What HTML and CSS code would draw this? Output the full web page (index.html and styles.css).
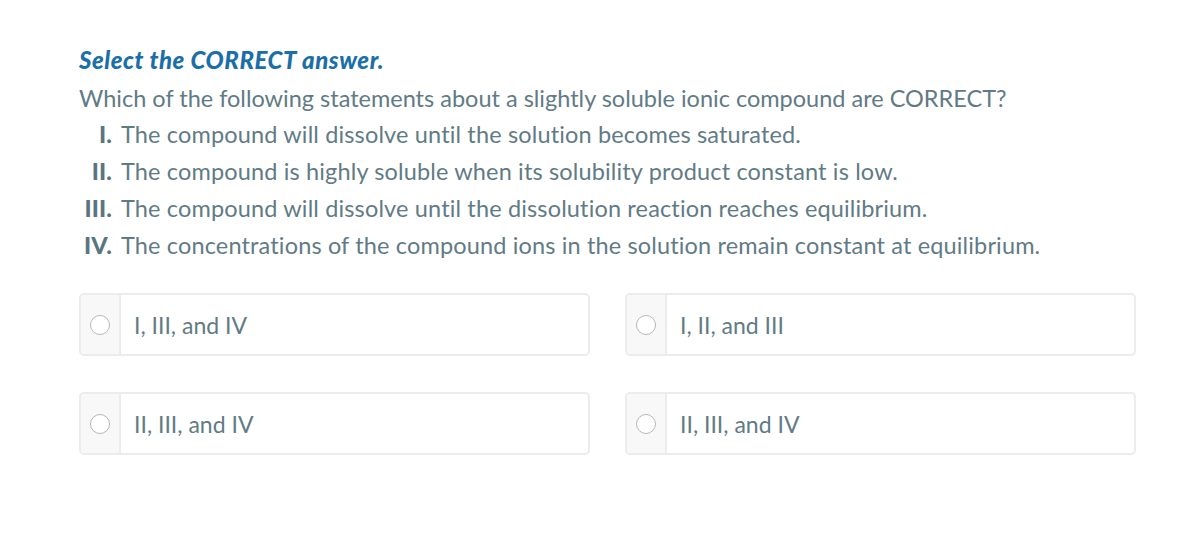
FILE: index.html
```html
<!DOCTYPE html>
<html>
<head>
<meta charset="utf-8">
<link rel="stylesheet" href="styles.css">
</head>
<body>
<div class="page">
  <h1 class="title">Select the CORRECT answer.</h1>
  <p class="question">Which of the following statements about a slightly soluble ionic compound are CORRECT?</p>
  <div class="statements">
    <div class="num">I.</div><div class="stmt">The compound will dissolve until the solution becomes saturated.</div>
    <div class="num">II.</div><div class="stmt">The compound is highly soluble when its solubility product constant is low.</div>
    <div class="num">III.</div><div class="stmt">The compound will dissolve until the dissolution reaction reaches equilibrium.</div>
    <div class="num">IV.</div><div class="stmt">The concentrations of the compound ions in the solution remain constant at equilibrium.</div>
  </div>
  <div class="options">
    <div class="option"><div class="radio-cell"><span class="radio"></span></div><div class="label">I, III, and IV</div></div>
    <div class="option"><div class="radio-cell"><span class="radio"></span></div><div class="label">I, II, and III</div></div>
    <div class="option"><div class="radio-cell"><span class="radio"></span></div><div class="label">II, III, and IV</div></div>
    <div class="option"><div class="radio-cell"><span class="radio"></span></div><div class="label">II, III, and IV</div></div>
  </div>
</div>
</body>
</html>
```
FILE: styles.css
```css
html, body {
  margin: 0;
  padding: 0;
  background: #ffffff;
}
.page {
  padding: 44px 0 0 79px;
  width: 1057px;
  font-family: Lato, "Open Sans", sans-serif;
  color: #617b85;
}
.title {
  margin: 0;
  font-size: 24px;
  line-height: 32px;
  font-weight: 900;
  font-style: italic;
  letter-spacing: 0.55px;
  color: #1b6fa8;
}
.question {
  margin: 6px 0 0 0;
  font-size: 23.5px;
  line-height: 32px;
}
.statements {
  display: grid;
  grid-template-columns: 33px 1fr;
  column-gap: 9px;
  row-gap: 5px;
  margin-top: 4px;
  font-size: 23.5px;
  line-height: 32px;
  letter-spacing: 0.15px;
}
.num {
  text-align: right;
  font-weight: 900;
  color: #5a7580;
}
.options {
  display: grid;
  grid-template-columns: 511px 511px;
  column-gap: 35px;
  row-gap: 36px;
  margin-top: 32px;
}
.option {
  display: flex;
  height: 59px;
  border: 2px solid #ececec;
  border-radius: 5px;
  overflow: hidden;
}
.radio-cell {
  width: 38px;
  background: #f8f8f8;
  border-right: 2px solid #ececec;
  display: flex;
  align-items: center;
  justify-content: center;
}
.radio {
  width: 18px;
  height: 18px;
  border: 1px solid #b8b8b8;
  border-radius: 50%;
  background: #fff;
}
.label {
  display: flex;
  align-items: center;
  padding-left: 13px;
  font-size: 23px;
}
```
